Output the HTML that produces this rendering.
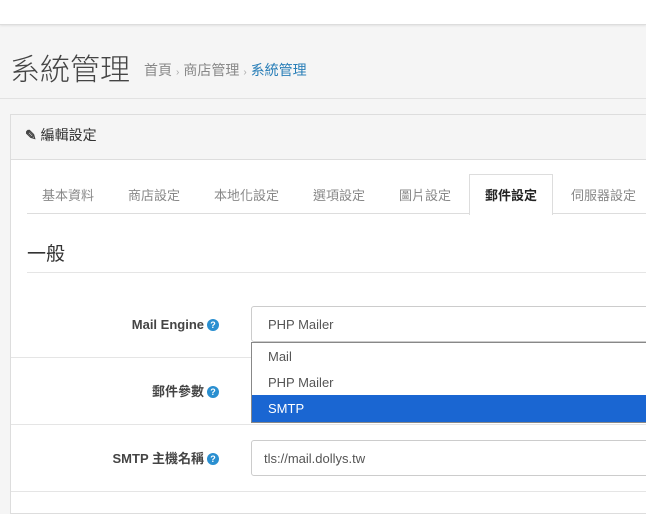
<!DOCTYPE html>
<html><head><meta charset="utf-8"><style>
*{box-sizing:border-box;margin:0;padding:0}
body{width:646px;height:495px;overflow:hidden;background:#f5f5f5;font-family:"Liberation Sans","Noto Sans CJK TC",sans-serif;position:relative;color:#555}
.top{position:absolute;left:0;top:0;width:646px;height:25px;background:#fff;border-bottom:1px solid #ddd;box-shadow:0 1px 2px rgba(0,0,0,.08)}
.h1{position:absolute;left:10px;top:45px;font-size:30px;color:#444;font-weight:300}
.bc{position:absolute;left:144px;top:60px;font-size:14px;color:#888}
.bc span.a{color:#2a7fb8}
.bc i{font-style:normal;font-size:10px;color:#aaa;margin:0 4px}
.hr1{position:absolute;left:0;top:98px;width:646px;border-top:1px solid #e2e2e2}
.panel{position:absolute;left:10px;top:114px;width:660px;height:400px;border:1px solid #ddd;background:#fff}
.ph{height:45px;background:#f5f5f5;border-bottom:1px solid #ddd;font-size:14px;color:#333;padding:10px 0 0 14px}
.tabs{position:absolute;left:16px;top:98px;width:640px;border-bottom:1px solid #ddd;height:1px}
.tab{position:absolute;top:70px;font-size:13px;color:#888}
.act{position:absolute;left:458px;top:59px;width:84px;height:41px;background:#fff;border:1px solid #ddd;border-bottom:none;font-size:13px;font-weight:bold;color:#222;text-align:center;padding-top:10px}
.leg{position:absolute;left:16px;top:124px;font-size:19px;color:#333}
.hr2{position:absolute;left:16px;top:157px;width:640px;border-top:1px solid #e5e5e5}
.row{position:absolute;left:0;width:660px;border-top:1px solid #e5e5e5}
.lbl{position:absolute;right:450px;font-size:13px;font-weight:bold;color:#444;white-space:nowrap}
.q{display:inline-block;width:12px;height:12px;border-radius:50%;background:#2a8fd0;color:#fff;font-size:9px;text-align:center;line-height:12px;vertical-align:1px;margin-left:3px}
.inp{position:absolute;left:240px;width:420px;height:36px;border:1px solid #ccc;border-radius:3px;font-size:13px;color:#555;padding:10px 0 0 16px}
.dd{position:absolute;left:240px;top:227px;width:420px;height:53px;border:1px solid #888;background:#fff;font-size:13px;color:#555}
.dd div{height:26px;padding:6px 0 0 16px}
</style></head><body>
<div class="top"></div>
<div class="h1">系統管理</div>
<div class="bc">首頁<i>›</i>商店管理<i>›</i><span class="a">系統管理</span></div>
<div class="hr1"></div>
<div class="panel">
<div class="ph"><span style="font-size:14px;font-weight:bold;color:#444">✎</span> 編輯設定</div>
<div class="tab" style="left:31px">基本資料</div>
<div class="tab" style="left:117px">商店設定</div>
<div class="tab" style="left:203px">本地化設定</div>
<div class="tab" style="left:302px">選項設定</div>
<div class="tab" style="left:388px">圖片設定</div>
<div class="tab" style="left:560px">伺服器設定</div>
<div class="tabs"></div>
<div class="act">郵件設定</div>
<div class="leg">一般</div>
<div class="hr2"></div>
<div class="lbl" style="top:202px">Mail Engine<span class="q">?</span></div>
<div class="inp" style="top:191px">PHP Mailer</div>
<div class="row" style="top:242px"></div>
<div class="lbl" style="top:266px">郵件參數<span class="q">?</span></div>
<div class="row" style="top:309px"></div>
<div class="lbl" style="top:333px">SMTP 主機名稱<span class="q">?</span></div>
<div class="inp" style="top:325px;padding-left:12px">tls://mail.dollys.tw</div>
<div class="row" style="top:376px"></div>
<div class="dd" style="height:54px;top:227px;border-bottom:none"><div>Mail</div><div>PHP Mailer</div></div>
<div style="position:absolute;left:240px;top:280px;width:420px;height:28px;background:#1a66d2;border:1px solid #888;border-top:none;color:#fff;font-size:13px;padding:6px 0 0 16px">SMTP</div>
</div>
</body></html>
